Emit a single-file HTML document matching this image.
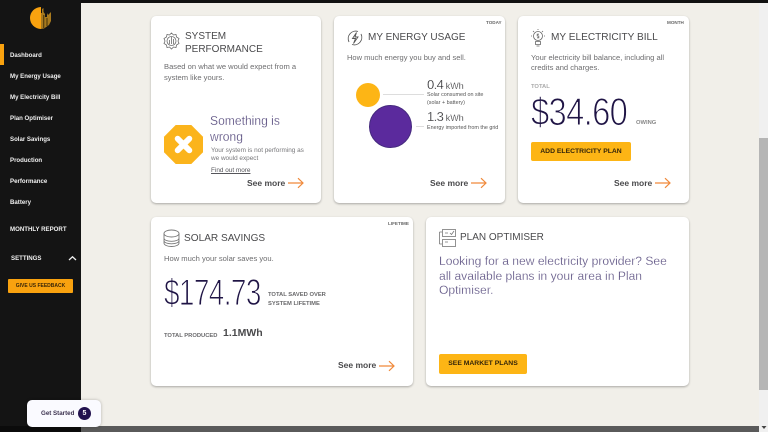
<!DOCTYPE html>
<html><head><meta charset="utf-8"><style>
*{box-sizing:border-box}
html,body{margin:0;padding:0;width:768px;height:432px;overflow:hidden;background:#f1efe9;font-family:"Liberation Sans",sans-serif}
.a{position:absolute;white-space:nowrap}
#side{position:absolute;left:0;top:0;width:81px;height:432px;background:#141414}
.nav{position:absolute;left:10px;color:#f0f0f0;font-size:6.1px;font-weight:bold;line-height:10px;white-space:nowrap;margin-top:.5px}
.card{position:absolute;background:#fff;border-radius:5px;box-shadow:0 1px 2px rgba(0,0,0,.3)}
.h{position:absolute;color:#4a4a4c;font-size:10px;line-height:15px;white-space:nowrap}
.d{position:absolute;color:#6d6d6f;font-size:7.6px;line-height:10.5px;white-space:nowrap}
.thin{position:absolute;color:#1f1445;font-weight:normal;white-space:nowrap;letter-spacing:-.8px;transform-origin:0 0;-webkit-text-stroke:1.100px #fff}
.sm{position:absolute;color:#69696b;font-size:5.8px;line-height:9px;font-weight:bold;white-space:nowrap}
.see{position:absolute;color:#4a4a4c;font-size:8.5px;font-weight:bold;line-height:11px;white-space:nowrap}
.btn{position:absolute;background:#fdb515;border-radius:2px;color:#33240a;font-size:6.8px;font-weight:bold;text-align:center;white-space:nowrap}
.tag{position:absolute;color:#666;font-size:4.6px;font-weight:bold;line-height:6px;white-space:nowrap}
.lt{-webkit-text-stroke:.18px #fff}
svg{position:absolute;overflow:visible}
</style></head><body>
<div class="a" style="left:0;top:0;width:768px;height:3px;background:#111"></div>
<div id="side"></div>
<svg style="left:30px;top:7px" width="22" height="23" viewBox="0 0 22 23">
<path d="M11 0A11 11 0 0 0 11 22Z" fill="#f9a20f"/>
<path d="M11 22V6H12V2L13.500 1V5L15 7V10H17V6L18 8L21 5V14L19 18L14 21.500Z" fill="#a87a1e"/>
<path d="M13.800 8V21M17 11V19" stroke="#2a2008" stroke-width=".8"/>
</svg>
<div class="a" style="left:0;top:44px;width:4px;height:21px;background:#f9a20f"></div>
<div class="nav" style="top:50px">Dashboard</div>
<div class="nav" style="top:71px">My Energy Usage</div>
<div class="nav" style="top:92px">My Electricity Bill</div>
<div class="nav" style="top:113px">Plan Optimiser</div>
<div class="nav" style="top:134px">Solar Savings</div>
<div class="nav" style="top:155px">Production</div>
<div class="nav" style="top:176px">Performance</div>
<div class="nav" style="top:197px">Battery</div>
<div class="nav" style="top:224.500px">MONTHLY REPORT</div>
<div class="nav" style="top:253px;left:11px">SETTINGS</div>
<svg style="left:68px;top:255px" width="9" height="6" viewBox="0 0 9 6"><path d="M1 5L4.500 1.800L8 5" fill="none" stroke="#eee" stroke-width="1.300"/></svg>
<div class="a" style="left:8px;top:279px;width:65px;height:14px;background:#f9a20f;border-radius:1px;color:#3a2608;font-size:5px;font-weight:bold;line-height:14px;text-align:center">GIVE US FEEDBACK</div>

<div class="a" style="left:759px;top:3px;width:9px;height:429px;background:#f0f0f0"></div>
<div class="a" style="left:759px;top:138px;width:9px;height:252px;background:#b5b5b5"></div>
<div class="a" style="left:81px;top:426px;width:678px;height:6px;background:#5a5a5a"></div>
<div class="a" style="left:0;top:426px;width:81px;height:6px;background:#0b0b0b"></div>
<svg style="left:760px;top:424px" width="8" height="6" viewBox="0 0 8 6"><path d="M1.500 2H6.500L4 5Z" fill="#444"/></svg>

<!-- System performance -->
<div class="card" style="left:151px;top:16px;width:170px;height:187px"></div>
<svg style="left:163px;top:32px" width="17" height="18" viewBox="0 0 17 18" fill="none" stroke="#6b6b6b" stroke-width=".8">
<path d="M8.500 1L10.500 3L13 2.500L13.500 5L16 6.500L15 9L16 11.500L13.500 13L13 15.500L10.500 15L8.500 17L6.500 15L4 15.500L3.500 13L1 11.500L2 9L1 6.500L3.500 5L4 2.500L6.500 3Z"/><circle cx="8.500" cy="9" r="4.500"/><path d="M6.500 12V8M8.500 12V5M10.500 12V7"/></svg>
<div class="h" style="left:185px;top:29px">SYSTEM</div>
<div class="h" style="left:185px;top:41.500px">PERFORMANCE</div>
<div class="d" style="left:164px;top:62px">Based on what we would expect from a</div>
<div class="d" style="left:164px;top:73px">system like yours.</div>
<svg style="left:164px;top:125px" width="39" height="39" viewBox="0 0 40 40">
<path d="M12 0H28L40 12V28L28 40H12L0 28V12Z" fill="#fbb41c"/>
<path d="M14 14L26 26M26 14L14 26" stroke="#fff" stroke-width="6" stroke-linecap="round"/></svg>
<div class="a lt" style="left:210px;top:112.500px;font-size:13px;line-height:16px;color:#5a4f80;transform:scaleX(.93);transform-origin:0 0">Something is</div>
<div class="a lt" style="left:210px;top:128.500px;font-size:13px;line-height:16px;color:#5a4f80;transform:scaleX(.93);transform-origin:0 0">wrong</div>
<div class="a" style="left:211px;top:146px;font-size:6.400px;line-height:9px;color:#77777a">Your system is not performing as</div>
<div class="a" style="left:211px;top:154px;font-size:6.400px;line-height:9px;color:#77777a">we would expect</div>
<div class="a" style="left:211px;top:166px;font-size:6.400px;line-height:9px;color:#55555a;text-decoration:underline">Find out more</div>
<div class="see" style="left:247px;top:178px">See more</div>
<svg style="left:288px;top:177px" width="16" height="12" viewBox="0 0 16 12"><path d="M0 6H15M10 1.200L15 6L10 10.800" fill="none" stroke="#f0893a" stroke-width="1.200"/></svg>

<!-- Energy usage -->
<div class="card" style="left:334px;top:16px;width:171px;height:187px"></div>
<div class="tag" style="left:486px;top:20px">TODAY</div>
<svg style="left:346px;top:29px" width="18" height="18" viewBox="0 0 18 18" fill="none" stroke="#555" stroke-width=".9">
<path d="M3 13A7.500 7.500 0 0 1 12 2.500M15 5A7.500 7.500 0 0 1 6 15.500"/><path d="M10.500 3.500L6.500 9.500H9.500L7.500 14.500L12 8H9Z"/></svg>
<div class="h" style="left:368px;top:30px">MY ENERGY USAGE</div>
<div class="d" style="left:347px;top:53px;font-size:7.500px">How much energy you buy and sell.</div>
<div class="a" style="left:356px;top:83px;width:24px;height:24px;border-radius:50%;background:#fdb515"></div>
<div class="a" style="left:369px;top:105px;width:43px;height:43px;border-radius:50%;background:#5b2a9d;border:1px solid #452a7e"></div>
<div class="a" style="left:383px;top:94px;width:41px;height:1px;background:#ddd"></div>
<div class="a" style="left:416px;top:126px;width:8px;height:1px;background:#ddd"></div>
<div class="a lt" style="left:427px;top:77px;font-size:13px;line-height:15px;color:#2f2f32;letter-spacing:-.6px">0.4<span style="font-size:9px;letter-spacing:0"> kWh</span></div>
<div class="a" style="left:427px;top:91px;font-size:5.400px;line-height:8px;color:#555">Solar consumed on site</div>
<div class="a" style="left:427px;top:99px;font-size:5.400px;line-height:8px;color:#555">(solar + battery)</div>
<div class="a lt" style="left:427px;top:109px;font-size:13px;line-height:15px;color:#2f2f32;letter-spacing:-.6px">1.3<span style="font-size:9px;letter-spacing:0"> kWh</span></div>
<div class="a" style="left:427px;top:124px;font-size:5.400px;line-height:8px;color:#555">Energy imported from the grid</div>
<div class="see" style="left:430px;top:178px">See more</div>
<svg style="left:471px;top:177px" width="16" height="12" viewBox="0 0 16 12"><path d="M0 6H15M10 1.200L15 6L10 10.800" fill="none" stroke="#f0893a" stroke-width="1.200"/></svg>

<!-- Electricity bill -->
<div class="card" style="left:518px;top:16px;width:171px;height:187px"></div>
<div class="tag" style="left:667px;top:20px">MONTH</div>
<svg style="left:530px;top:29px" width="16" height="18" viewBox="0 0 16 18" fill="none" stroke="#666" stroke-width=".8">
<circle cx="8" cy="7" r="4.500"/><path d="M5.500 12.500H10.500V15.500H5.500ZM6.500 17H9.500M1 7H2M14 7H15M3 2L4 3M13 2L12 3M8 0V1"/><path d="M9 5.200H7.200V7H8.800V8.800H7"/></svg>
<div class="h" style="left:551px;top:30px;font-size:10.100px">MY ELECTRICITY BILL</div>
<div class="d" style="left:531px;top:53px">Your electricity bill balance, including all</div>
<div class="d" style="left:531px;top:63px">credits and charges.</div>
<div class="sm" style="left:531px;top:83px;color:#aaa">TOTAL</div>
<div class="thin" style="left:531px;top:91px;font-size:39px;line-height:44px;transform:scaleX(.84)">$34.60</div>
<div class="sm" style="left:636px;top:119px;color:#888">OWING</div>
<div class="btn" style="left:531px;top:142px;width:100px;height:19px;line-height:19px">ADD ELECTRICITY PLAN</div>
<div class="see" style="left:614px;top:178px">See more</div>
<svg style="left:655px;top:177px" width="16" height="12" viewBox="0 0 16 12"><path d="M0 6H15M10 1.200L15 6L10 10.800" fill="none" stroke="#f0893a" stroke-width="1.200"/></svg>

<!-- Solar savings -->
<div class="card" style="left:151px;top:217px;width:262px;height:169px"></div>
<div class="tag" style="left:388px;top:221px">LIFETIME</div>
<svg style="left:163px;top:229px" width="17" height="18" viewBox="0 0 17 18" fill="none" stroke="#777" stroke-width=".9">
<ellipse cx="8.500" cy="4.500" rx="7.500" ry="3.500"/><path d="M1 4.500V14C1 16 4 17.500 8.500 17.500S16 16 16 14V4.500M1 9C1 11 4 12.300 8.500 12.300S16 11 16 9M1 11.500C1 13.500 4 14.800 8.500 14.800S16 13.500 16 11.500"/></svg>
<div class="h" style="left:184px;top:231px;font-size:10.100px">SOLAR SAVINGS</div>
<div class="d" style="left:164px;top:254px">How much your solar saves you.</div>
<div class="thin" style="left:164px;top:272px;font-size:37px;line-height:42px;transform:scaleX(.755)">$174.73</div>
<div class="sm" style="left:268px;top:291px">TOTAL SAVED OVER</div>
<div class="sm" style="left:268px;top:300px">SYSTEM LIFETIME</div>
<div class="sm" style="left:164px;top:332px">TOTAL PRODUCED</div>
<div class="a" style="left:223px;top:327px;font-size:10.500px;line-height:13px;font-weight:bold;color:#4a4a4c">1.1MWh</div>
<div class="see" style="left:338px;top:360px">See more</div>
<svg style="left:379px;top:360px" width="16" height="12" viewBox="0 0 16 12"><path d="M0 6H15M10 1.200L15 6L10 10.800" fill="none" stroke="#f0893a" stroke-width="1.200"/></svg>

<!-- Plan optimiser -->
<div class="card" style="left:426px;top:217px;width:263px;height:169px"></div>
<svg style="left:439px;top:229px" width="17" height="18" viewBox="0 0 17 18" fill="none" stroke="#777" stroke-width=".8">
<rect x="3.500" y=".5" width="13" height="7"/><rect x="3.500" y="10.500" width="13" height="7"/><path d="M0.500 3V15M0.500 3H3M0.500 15H3M6 4H9M6 13H9M11 4L12.500 5.500L15 2"/></svg>
<div class="a" style="left:460px;top:231px;font-size:10px;line-height:14px;color:#4a4a4c">PLAN OPTIMISER</div>
<div class="a lt" style="left:439px;top:254px;font-size:12.100px;line-height:15px;color:#5f5484">Looking for a new electricity provider? See</div>
<div class="a lt" style="left:439px;top:268.500px;font-size:12.100px;line-height:15px;color:#5f5484">all available plans in your area in Plan</div>
<div class="a lt" style="left:439px;top:283px;font-size:12.100px;line-height:15px;color:#5f5484">Optimiser.</div>
<div class="btn" style="left:439px;top:354px;width:88px;height:20px;line-height:20px">SEE MARKET PLANS</div>

<!-- Get started -->
<div class="a" style="left:27px;top:400px;width:74px;height:27px;background:#fafaff;border-radius:5px;box-shadow:0 0 3px rgba(0,0,0,.25)"></div>
<div class="a" style="left:41px;top:409px;font-size:6.200px;font-weight:bold;line-height:9px;color:#3c3250">Get Started</div>
<div class="a" style="left:78px;top:407px;width:13px;height:13px;border-radius:50%;background:#22124f;color:#fff;font-size:7px;font-weight:bold;line-height:13px;text-align:center">5</div>
</body></html>
